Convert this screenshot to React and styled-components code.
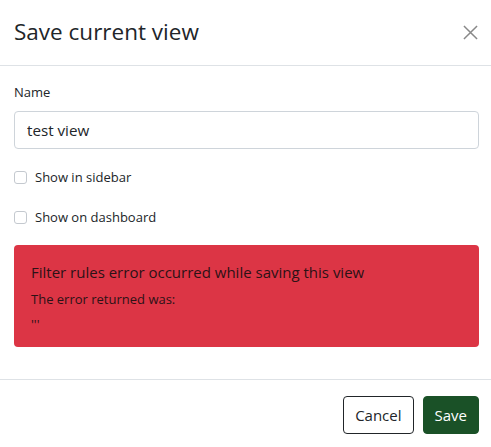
import React from 'react';
import styled, { createGlobalStyle } from 'styled-components';

const GlobalStyle = createGlobalStyle`
  html, body {
    margin: 0;
    background: #fff;
    font-family: "Open Sans", "Noto Sans", sans-serif;
    color: #212529;
  }
  * { box-sizing: border-box; }
`;

const Modal = styled.div`
  width: 491px;
  background: #fff;
`;

const Header = styled.div`
  display: flex;
  align-items: center;
  justify-content: space-between;
  padding: 16px 12px 17px 14px;
  border-bottom: 1px solid #dee2e6;
`;

const Title = styled.h5`
  margin: 0;
  font-size: 22.5px;
  font-weight: 400;
  line-height: 32px;
`;

const Close = styled.button`
  border: 0;
  background: transparent;
  padding: 0;
  width: 18px;
  height: 18px;
  display: flex;
  align-items: center;
  justify-content: center;
  color: #888;
  cursor: pointer;
`;

const Body = styled.div`
  padding: 16px 12px 16px 14px;
`;

const Label = styled.label`
  display: block;
  font-size: 13px;
  line-height: 21px;
  margin-bottom: 8px;
`;

const Input = styled.input`
  display: block;
  width: 100%;
  height: 38px;
  padding: 6px 12px;
  font-family: inherit;
  font-size: 15.2px;
  color: #212529;
  border: 1px solid #ced4da;
  border-radius: 4px;
  outline: none;
`;

const Check = styled.label`
  display: flex;
  align-items: center;
  gap: 8px;
  height: 24px;
  margin-top: 16px;
  font-size: 13px;
`;

const Box = styled.span`
  width: 13px;
  height: 13px;
  border: 1px solid #c4c9cf;
  border-radius: 3px;
  background: #fff;
`;

const Alert = styled.div`
  margin: 16px 0 16px;
  padding: 16px 17px 12px;
  background: #dc3545;
  border-radius: 4px;
  color: #2c1216;
`;

const AlertHeading = styled.div`
  font-size: 15px;
  line-height: 22px;
  margin-bottom: 6px;
`;

const AlertText = styled.p`
  margin: ${p => (p.gap ? '4px 0 0' : '0')};
  font-size: 13px;
  line-height: 21px;
`;

const Footer = styled.div`
  display: flex;
  justify-content: flex-end;
  gap: 9px;
  padding: 16px 12px 12px 14px;
  border-top: 1px solid #dee2e6;
`;

const Button = styled.button`
  height: 38px;
  padding: 0 11px;
  font-family: inherit;
  font-size: 15px;
  border-radius: 4px;
  border: 1px solid ${p => (p.primary ? '#1a5127' : '#212529')};
  background: ${p => (p.primary ? '#1a5127' : '#fff')};
  color: ${p => (p.primary ? '#fff' : '#212529')};
`;

export default function App() {
  return (
    <>
      <GlobalStyle />
      <Modal>
        <Header>
          <Title>Save current view</Title>
          <Close aria-label="Close">
            <svg width="15" height="15" viewBox="0 0 16 16">
              <path d="M1 1L15 15M15 1L1 15" stroke="currentColor" strokeWidth="1.6" />
            </svg>
          </Close>
        </Header>
        <Body>
          <Label>Name</Label>
          <Input defaultValue="test view" />
          <Check>
            <Box />
            Show in sidebar
          </Check>
          <Check>
            <Box />
            Show on dashboard
          </Check>
          <Alert>
            <AlertHeading>Filter rules error occurred while saving this view</AlertHeading>
            <AlertText>The error returned was:</AlertText>
            <AlertText gap>'''</AlertText>
          </Alert>
        </Body>
        <Footer>
          <Button>Cancel</Button>
          <Button primary>Save</Button>
        </Footer>
      </Modal>
    </>
  );
}
